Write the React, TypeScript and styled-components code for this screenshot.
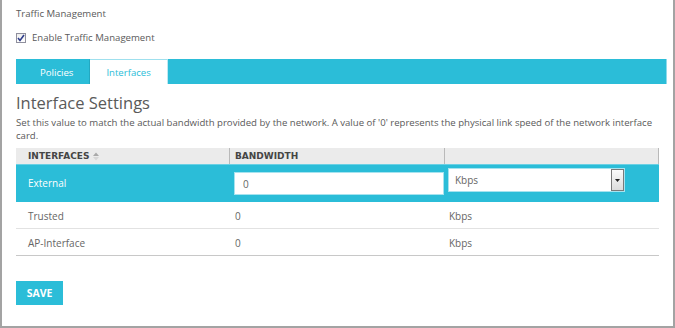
import React from 'react';
import styled, { createGlobalStyle } from 'styled-components';

const TEAL = '#2bbdd8';
const TEXT = '#5a5a5a';

const GlobalStyle = createGlobalStyle`
  html, body {
    margin: 0;
    padding: 0;
    background: #ffffff;
  }
  body {
    font-family: 'Open Sans', 'Liberation Sans', sans-serif;
    color: ${TEXT};
  }
  * {
    box-sizing: border-box;
  }
`;

const Frame = styled.div`
  width: 675px;
  height: 328px;
  border-left: 2px solid #a3a3a3;
  border-right: 2px solid #a3a3a3;
  border-bottom: 2px solid #a3a3a3;
  padding: 6px 6px 0 14px;
  display: flex;
  flex-direction: column;
`;

const Title = styled.div`
  font-size: 9.6px;
  line-height: 16px;
  color: ${TEXT};
`;

const CheckRow = styled.label`
  display: flex;
  align-items: center;
  gap: 6px;
  margin-top: 8px;
  font-size: 9.6px;
  line-height: 16px;
  color: ${TEXT};
`;

const CheckBox = styled.span`
  width: 10px;
  height: 10px;
  border: 1px solid #8f8f9d;
  background: linear-gradient(#eeeeee, #ffffff);
  display: flex;
  align-items: center;
  justify-content: center;
`;

const TabBar = styled.div`
  margin-top: 13px;
  height: 25px;
  width: 651px;
  background: ${TEAL};
  border-right: 1px solid #8fdaea;
  padding-left: 8px;
  display: flex;
`;

const Tab = styled.div<{ $active?: boolean }>`
  padding: 0 16px;
  display: flex;
  align-items: center;
  font-size: 9.6px;
  color: ${(p) => (p.$active ? TEAL : '#ffffff')};
  background: ${(p) => (p.$active ? '#ffffff' : TEAL)};
  border-top: 1px solid ${(p) => (p.$active ? '#9fe0ee' : TEAL)};
  border-right: 1px solid ${(p) => (p.$active ? '#bfe9f2' : '#23a8c1')};
`;

const Heading = styled.h2`
  margin: 9px 0 0;
  font-size: 16.5px;
  font-weight: 400;
  line-height: 20px;
  color: ${TEXT};
`;

const Description = styled.p`
  margin: 3px 0 0;
  width: 651px;
  font-size: 9.6px;
  line-height: 13px;
  color: ${TEXT};
`;

const Table = styled.div`
  margin-top: 6px;
  width: 643px;
  display: flex;
  flex-direction: column;
`;

const HeaderRow = styled.div`
  height: 16px;
  background: #ebebeb;
  display: grid;
  grid-template-columns: 213px 215px 215px;
  border-right: 1px solid #b9b9b9;
`;

const HeaderCell = styled.div<{ $pad: number; $divider?: boolean }>`
  display: flex;
  align-items: center;
  gap: 4px;
  padding-left: ${(p) => p.$pad}px;
  font-family: 'DejaVu Sans', Verdana, sans-serif;
  font-size: 9px;
  font-weight: 700;
  color: #454545;
  border-left: ${(p) => (p.$divider ? '1px solid #b9b9b9' : 'none')};
`;

const Row = styled.div<{ $selected?: boolean; $last?: boolean }>`
  height: ${(p) => (p.$selected ? '38px' : '27px')};
  display: grid;
  grid-template-columns: 213px 215px 215px;
  align-items: ${(p) => (p.$selected ? 'start' : 'center')};
  background: ${(p) => (p.$selected ? TEAL : '#ffffff')};
  border-top: 1px solid ${(p) => (p.$selected ? '#6ad0e4' : 'transparent')};
  border-bottom: 1px solid ${(p) => (p.$last ? '#c8c8c8' : p.$selected ? TEAL : '#e2e2e2')};
`;

const Cell = styled.div<{ $pad: number; $selected?: boolean }>`
  padding-left: ${(p) => p.$pad}px;
  font-size: 10px;
  color: ${(p) => (p.$selected ? '#ffffff' : '#666666')};
  display: flex;
  align-items: center;
  align-self: center;
`;

const InputCell = styled.div<{ $pad: number; $top: number }>`
  padding-left: ${(p) => p.$pad}px;
  padding-top: ${(p) => p.$top}px;
  align-self: start;
  display: flex;
`;

const TextInput = styled.input`
  width: 211px;
  height: 23px;
  border: 1px solid #a6e3ef;
  background: #ffffff;
  padding: 0 8px;
  font-family: 'Open Sans', 'Liberation Sans', sans-serif;
  font-size: 10px;
  color: #666666;
  outline: none;
`;

const Select = styled.div`
  width: 177px;
  height: 24px;
  border: 1px solid #a6e3ef;
  background: #ffffff;
  display: flex;
  align-items: center;
  justify-content: space-between;
  padding-left: 6px;
  font-size: 10px;
  color: #666666;
`;

const SelectButton = styled.span`
  width: 13px;
  height: 22px;
  border: 1px solid #7a7a7a;
  background: linear-gradient(#fbfbfb, #dcdcdc);
  display: flex;
  align-items: center;
  justify-content: center;
`;

const Footer = styled.div`
  margin-top: 25px;
  display: flex;
`;

const SaveButton = styled.button`
  width: 47px;
  height: 24px;
  border: none;
  background: ${TEAL};
  color: #ffffff;
  font-family: 'Open Sans', 'Liberation Sans', sans-serif;
  font-size: 10.5px;
  font-weight: 700;
  padding: 0;
  cursor: pointer;
`;

function SortIcon() {
  return (
    <svg width="6" height="9" viewBox="0 0 6 9">
      <path d="M0 4 L3 0.5 L6 4 Z" fill="#a9a9a9" />
      <path d="M0 5 L3 8.5 L6 5 Z" fill="#d6d6d6" />
    </svg>
  );
}

function Check() {
  return (
    <svg width="8" height="8" viewBox="0 0 8 8">
      <path d="M1 4 L3 6.5 L7 1" fill="none" stroke="#2f3e8c" strokeWidth="1.6" />
    </svg>
  );
}

const rows = [
  { name: 'Trusted', bandwidth: '0', unit: 'Kbps' },
  { name: 'AP-Interface', bandwidth: '0', unit: 'Kbps' },
];

export default function App() {
  return (
    <>
      <GlobalStyle />
      <Frame>
        <Title>Traffic Management</Title>
        <CheckRow>
          <CheckBox>
            <Check />
          </CheckBox>
          Enable Traffic Management
        </CheckRow>
        <TabBar>
          <Tab>Policies</Tab>
          <Tab $active>Interfaces</Tab>
        </TabBar>
        <Heading>Interface Settings</Heading>
        <Description>
          Set this value to match the actual bandwidth provided by the network. A value of '0' represents the
          physical link speed of the network interface card.
        </Description>
        <Table>
          <HeaderRow>
            <HeaderCell $pad={12}>
              INTERFACES <SortIcon />
            </HeaderCell>
            <HeaderCell $pad={5} $divider>
              BANDWIDTH
            </HeaderCell>
            <HeaderCell $pad={5} $divider />
          </HeaderRow>
          <Row $selected>
            <Cell $pad={12} $selected>
              External
            </Cell>
            <InputCell $pad={5} $top={7}>
              <TextInput defaultValue="0" />
            </InputCell>
            <InputCell $pad={4} $top={3}>
              <Select>
                Kbps
                <SelectButton>
                  <svg width="5" height="3" viewBox="0 0 5 3">
                    <path d="M0 0 L5 0 L2.5 3 Z" fill="#222" />
                  </svg>
                </SelectButton>
              </Select>
            </InputCell>
          </Row>
          {rows.map((r, i) => (
            <Row key={r.name} $last={i === rows.length - 1}>
              <Cell $pad={12}>{r.name}</Cell>
              <Cell $pad={6}>{r.bandwidth}</Cell>
              <Cell $pad={5}>{r.unit}</Cell>
            </Row>
          ))}
        </Table>
        <Footer>
          <SaveButton>SAVE</SaveButton>
        </Footer>
      </Frame>
    </>
  );
}
